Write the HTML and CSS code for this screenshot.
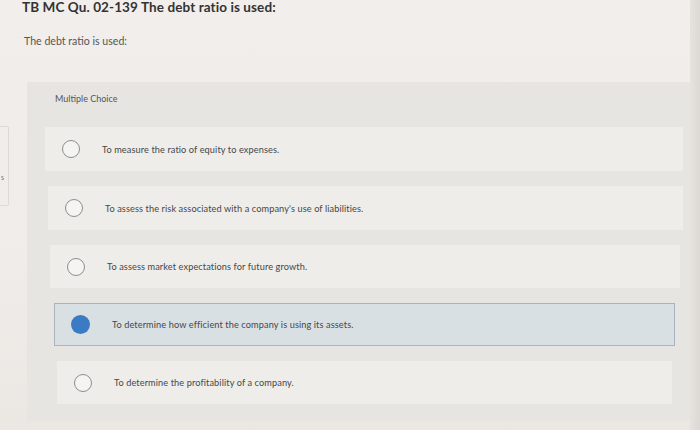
FILE: index.html
```html
<!DOCTYPE html>
<html>
<head>
<meta charset="utf-8">
<link rel="stylesheet" href="styles.css">
</head>
<body>
<div class="page">
  <div class="side-tab"><span>s</span></div>
  <div class="main">
    <h1 class="title">TB MC Qu. 02-139 The debt ratio is used:</h1>
    <p class="question">The debt ratio is used:</p>
    <section class="panel">
      <div class="panel-label">Multiple Choice</div>
      <div class="options">
        <div class="option o1"><span class="radio"></span><span class="text">To measure the ratio of equity to expenses.</span></div>
        <div class="option o2"><span class="radio"></span><span class="text">To assess the risk associated with a company's use of liabilities.</span></div>
        <div class="option o3"><span class="radio"></span><span class="text">To assess market expectations for future growth.</span></div>
        <div class="option o4 selected"><span class="radio"></span><span class="text">To determine how efficient the company is using its assets.</span></div>
        <div class="option o5"><span class="radio"></span><span class="text">To determine the profitability of a company.</span></div>
      </div>
    </section>
  </div>
  <div class="edge"></div>
</div>
</body>
</html>
```

FILE: styles.css
```css
html, body {
  margin: 0;
  padding: 0;
}
body {
  width: 700px;
  height: 430px;
  overflow: hidden;
  background: linear-gradient(180deg, #f2eeec 0%, #efece9 60%, #ebe8e4 100%);
  font-family: Lato, "Liberation Sans", sans-serif;
  color: #444;
}
.page {
  display: flex;
  height: 430px;
  position: relative;
}
.side-tab {
  position: absolute;
  left: -4px;
  top: 126px;
  width: 11px;
  height: 78px;
  border: 1px solid #dcd9d6;
  border-radius: 2px;
  font-size: 7px;
  color: #777;
}
.side-tab span {
  position: absolute;
  left: 4px;
  top: 46px;
}
.main {
  flex: 1;
  padding-left: 22px;
}
.edge {
  width: 10px;
  background: linear-gradient(90deg, #e6e2de, #dcd8d3);
}
.title {
  margin: 0;
  padding-top: 0;
  font-size: 13.5px;
  line-height: 14px;
  font-weight: 700;
  color: #333;
  letter-spacing: 0.1px;
}
.question {
  margin: 21px 0 0 2px;
  font-size: 10.6px;
  line-height: 13px;
  color: #555;
}
.panel {
  margin: 34px 0 0 5px;
  width: 663px;
  height: 339px;
  background: #e7e5e1;
  padding-top: 11px;
  box-sizing: border-box;
}
.panel-label {
  margin-left: 28px;
  font-size: 9px;
  line-height: 11px;
  color: #555;
}
.options {
  display: flex;
  flex-direction: column;
  gap: 15px;
  margin-top: 23px;
}
.option {
  display: flex;
  align-items: center;
  height: 44px;
  box-sizing: border-box;
  background: #eeede9;
  padding-left: 17px;
}
.o1 { margin-left: 18px; width: 638px; }
.o2 { margin-left: 21px; width: 635px; }
.o3 { margin-left: 23px; width: 630px; height: 43px; }
.o4 { margin-left: 27px; width: 621px; height: 43px; }
.o5 { margin-left: 30px; width: 615px; height: 43px; }
.radio {
  width: 18px;
  height: 18px;
  box-sizing: border-box;
  border: 1.4px solid #8d8d8d;
  border-radius: 50%;
  background: #f4f4f2;
  flex: none;
}
.text {
  margin-left: 22px;
  font-size: 9.2px;
  letter-spacing: 0.1px;
  color: #474747;
  white-space: nowrap;
}
.selected {
  background: #d9e0e4;
  border: 1px solid #aab2bd;
  padding-left: 16px;
}
.selected .radio {
  border: none;
  background: #3b7bc3;
  width: 19px;
  height: 19px;
}
```
